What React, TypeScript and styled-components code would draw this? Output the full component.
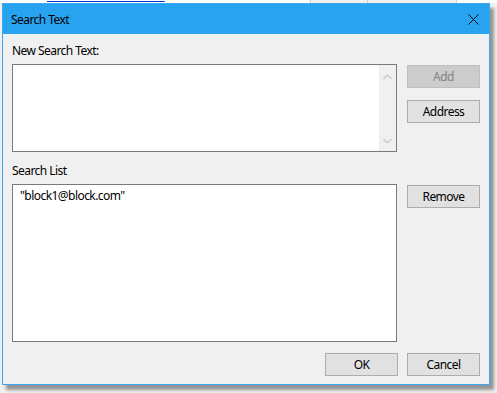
import React from 'react'
import styled, { createGlobalStyle } from 'styled-components'

const GlobalStyle = createGlobalStyle`
  html, body {
    margin: 0;
    padding: 0;
  }
  body {
    width: 497px;
    height: 393px;
    overflow: hidden;
    background: #f4f4f4;
    font-family: 'Noto Sans', 'Liberation Sans', sans-serif;
    font-size: 12px;
    letter-spacing: -0.55px;
    color: #000;
  }
`

export default function App() {
  return (
    <>
      <GlobalStyle />
      <Screen>
        <BackStrip>
          <BackLink>see_block_tutorial.html</BackLink>
          <BackHeaders>
            <BackHeader>Block</BackHeader>
            <BackHeader>Never Block</BackHeader>
          </BackHeaders>
        </BackStrip>

        <Dialog>
          <TitleBar>
            <Title>Search Text</Title>
            <CloseButton aria-label="Close">
              <svg width="11" height="11" viewBox="0 0 11 11">
                <path d="M0.5 0.5 L10.5 10.5 M10.5 0.5 L0.5 10.5" stroke="#000" strokeWidth="1" />
              </svg>
            </CloseButton>
          </TitleBar>

          <Body>
            <Section $gapBelow={11}>
              <Label>New Search Text:</Label>
              <Box $height={88}>
                <BoxText />
                <ScrollTrack>
                  <svg width="9" height="6" viewBox="0 0 9 6">
                    <path d="M0.5 5 L4.5 1 L8.5 5" fill="none" stroke="#a6a6a6" strokeWidth="1" />
                  </svg>
                  <svg width="9" height="6" viewBox="0 0 9 6">
                    <path d="M0.5 1 L4.5 5 L8.5 1" fill="none" stroke="#a6a6a6" strokeWidth="1" />
                  </svg>
                </ScrollTrack>
              </Box>
              <ButtonStack>
                <Button disabled>Add</Button>
                <Button>Address</Button>
              </ButtonStack>
            </Section>

            <Section $gapBelow={0}>
              <Label>Search List</Label>
              <Box $height={158}>
                <BoxText>"block1@block.com"</BoxText>
              </Box>
              <ButtonStack>
                <Button>Remove</Button>
              </ButtonStack>
            </Section>

            <Footer>
              <Button>OK</Button>
              <Button>Cancel</Button>
            </Footer>
          </Body>
        </Dialog>
      </Screen>
    </>
  )
}

// background window peeking out
const Screen = styled.div`
  position: relative;
  width: 497px;
  height: 393px;
  background: #f0f0f0;
  overflow: hidden;
`

const BackStrip = styled.div`
  display: flex;
  align-items: flex-end;
  height: 3px;
  background: #fff;
  overflow: hidden;
`

const BackLink = styled.span`
  margin-left: 47px;
  width: 263px;
  color: #0033cc;
  text-decoration: underline;
  line-height: 14px;
  flex-shrink: 0;
`

const BackHeaders = styled.div`
  display: flex;
  height: 3px;
  background: #f0f0f0;
  border-left: 1px solid #d0d0d0;
  align-items: flex-end;
  overflow: hidden;
`

const BackHeader = styled.span`
  padding: 0 8px 0 20px;
  line-height: 14px;
  border-right: 1px solid #d0d0d0;
  white-space: nowrap;
`

// dialog window
const Dialog = styled.div`
  position: absolute;
  left: 2px;
  top: 3px;
  width: 486px;
  height: 380px;
  border: 1px solid #3aa8f2;
  background: #f0f0f0;
  box-shadow: 4px 5px 3px rgba(0, 0, 0, 0.38);
  display: flex;
  flex-direction: column;
`

const TitleBar = styled.div`
  height: 30px;
  background: #27a3ef;
  display: flex;
  align-items: center;
  justify-content: space-between;
  padding: 0 9px 0 8px;
  flex-shrink: 0;
`

const Title = styled.span`
  font-size: 12px;
  color: #000;
`

const CloseButton = styled.div`
  display: flex;
  align-items: center;
  justify-content: center;
  width: 12px;
  height: 12px;
  margin-right: 1px;
`

const Body = styled.div`
  flex: 1;
  display: flex;
  flex-direction: column;
  padding: 9px 9px 8px 9px;
`

const Section = styled.div<{ $gapBelow: number }>`
  display: grid;
  grid-template-columns: 385px 73px;
  grid-template-rows: 16px auto;
  column-gap: 10px;
  row-gap: 5px;
  margin-bottom: ${p => p.$gapBelow}px;
`

const Label = styled.div`
  grid-column: 1 / 3;
  line-height: 16px;
  color: #000;
`

const Box = styled.div<{ $height: number }>`
  position: relative;
  height: ${p => p.$height}px;
  box-sizing: border-box;
  border: 1px solid #7a7a7a;
  background: #fff;
  display: flex;
`

const BoxText = styled.div`
  flex: 1;
  padding: 3px 7px;
  line-height: 16px;
  white-space: pre;
`

const ScrollTrack = styled.div`
  width: 17px;
  background: #f0f0f0;
  display: flex;
  flex-direction: column;
  align-items: center;
  justify-content: space-between;
  padding: 9px 0 7px;
`

const ButtonStack = styled.div`
  display: flex;
  flex-direction: column;
  gap: 12px;
  padding-top: 1px;
`

const Button = styled.button`
  width: 73px;
  height: 23px;
  box-sizing: border-box;
  border: 1px solid #adadad;
  background: #e1e1e1;
  font-family: 'Noto Sans', 'Liberation Sans', sans-serif;
  font-size: 12px;
  letter-spacing: -0.55px;
  color: #000;
  padding: 0;
  &:disabled {
    background: #cccccc;
    border-color: #bfbfbf;
    color: #838383;
  }
`

const Footer = styled.div`
  margin-top: auto;
  display: flex;
  justify-content: flex-end;
  gap: 9px;
`
